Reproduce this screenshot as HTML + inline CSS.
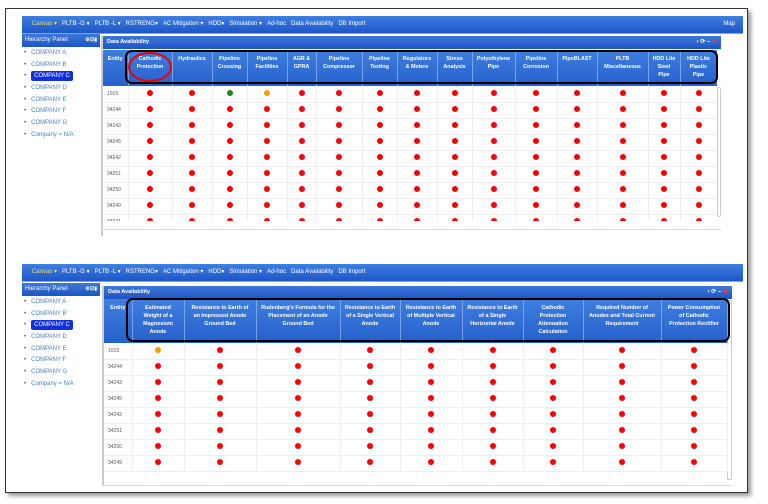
<!DOCTYPE html><html><head><meta charset="utf-8"><style>
*{box-sizing:border-box;margin:0;padding:0}
body{width:768px;height:504px;background:#fff;position:relative;overflow:hidden;font-family:"Liberation Sans",sans-serif}
.frame{position:absolute;left:5px;top:8px;width:743px;height:485px;border:1.5px solid #333;box-shadow:3px 3px 4px #999;background:#fff}
.nav{position:absolute;left:22px;height:18px;width:721px;background:linear-gradient(#3f7fe0,#1d56c8);border-bottom:1px solid #8ab;color:#fff;font-size:6px;line-height:17px;padding-left:10px;white-space:nowrap}
.nav span{margin-right:5px}.nav .y{color:#e8e070}
.hp{position:absolute;left:22px;width:78px;height:13px;background:linear-gradient(#3b77d8,#1d55c4);color:#fff;font-size:6px;line-height:13px;padding-left:3px}
.hp b{position:absolute;right:3px;font-size:5px}
.list{position:absolute;left:24px;font-size:6px;color:#4a7fc8}
.list div{height:11.7px;line-height:11.7px}
.list div:before{content:"•";color:#555;margin-right:5px}
.list .sel{display:inline-block;background:#1030e0;color:#fff;padding:0 3px;border-radius:2px;height:10px;line-height:10px}
.panel{position:absolute;background:#fff;border-left:2px solid #ccc}
.ph{position:absolute;left:0;right:0;top:0;height:13px;background:linear-gradient(#3b77d8,#1d55c4);color:#fff;font-size:5.5px;font-weight:bold;line-height:13px;padding-left:4px}
.ph i{position:absolute;right:4px;font-style:normal;font-size:6px}
table{border-collapse:collapse;table-layout:fixed}
th{background:linear-gradient(#3f7fe0,#2560cc);color:#fff;font-size:5.4px;font-weight:bold;vertical-align:top;padding:5px 4px 0;border-right:1px solid #7aa4e8;line-height:8px}
td{height:16px;border-right:1px solid #eee;border-bottom:1px solid #eee;text-align:center;font-size:5px;color:#555}
td.e{text-align:left;padding-left:4px}
.d{display:inline-block;width:6px;height:6px;border-radius:50%;background:#f00}
.o{background:#f5a000}.g{background:#1a8a1a}
.box{position:absolute;border:2.5px solid #000;border-radius:7px}
</style></head><body>
<div class="frame"></div>
<div class="nav" style="top:16px"><span class="y">Canvas ▾</span><span>PLTB -G ▾</span><span>PLTB -L ▾</span><span>RSTRENG▾</span><span>AC Mitigation ▾</span><span>HDD▾</span><span>Simulation ▾</span><span>Ad-hoc</span><span>Data Availability</span><span>DB Import</span><span style="position:absolute;right:3px">Map</span></div>
<div class="hp" style="top:34px">Hierarchy Panel<b>⚙☑▮</b></div>
<div class="list" style="top:48px"><div>COMPANY A</div><div>COMPANY B</div><div><span class="sel">COMPANY C</span></div><div>COMPANY D</div><div>COMPANY E</div><div>COMPANY F</div><div>COMPANY G</div><div>Company = N/A</div></div>
<div class="panel" style="left:101px;top:36px;width:620px;height:194px;border-bottom:1px solid #ddd">
<div class="ph">Data Availability<i>‹ ⟳ <span>‒</span> <span style="color:#f33">✖</span></i></div>
<div style="position:absolute;right:0;top:51px;width:4px;height:130px;border:1px solid #ccc;border-radius:2px"></div>
</div>
<div style="position:absolute;left:101px;top:230px;width:2px;height:6px;background:#ccc"></div>
<div style="position:absolute;left:103px;top:50px;width:614px;height:171px;overflow:hidden">
<table style="width:614px">
<colgroup><col style="width:25px"><col style="width:44px"><col style="width:40px"><col style="width:35px"><col style="width:40px"><col style="width:29px"><col style="width:46px"><col style="width:35px"><col style="width:40px"><col style="width:35px"><col style="width:43px"><col style="width:42px"><col style="width:40px"><col style="width:51px"><col style="width:32px"><col style="width:37px"></colgroup>
<tr style="height:36px"><th style="padding:5px 1px 0">Entity</th><th>Cathodic Protection</th><th>Hydraulics</th><th>Pipeline Crossing</th><th>Pipeline Facilities</th><th>AGR &amp; GPRA</th><th>Pipeline Compressor</th><th>Pipeline Testing</th><th>Regulators &amp; Meters</th><th>Stress Analysis</th><th>Polyethylene Pipe</th><th>Pipeline Corrosion</th><th>PipeBLAST</th><th>PLTB Miscellaneous</th><th>HDD Lite Steel Pipe</th><th>HDD Lite Plastic Pipe</th></tr>
<tr><td class="e">1015</td><td><i class="d"></i></td><td><i class="d"></i></td><td><i class="d g"></i></td><td><i class="d o"></i></td><td><i class="d"></i></td><td><i class="d"></i></td><td><i class="d"></i></td><td><i class="d"></i></td><td><i class="d"></i></td><td><i class="d"></i></td><td><i class="d"></i></td><td><i class="d"></i></td><td><i class="d"></i></td><td><i class="d"></i></td><td><i class="d"></i></td></tr>
<tr><td class="e">34244</td><td><i class="d"></i></td><td><i class="d"></i></td><td><i class="d"></i></td><td><i class="d"></i></td><td><i class="d"></i></td><td><i class="d"></i></td><td><i class="d"></i></td><td><i class="d"></i></td><td><i class="d"></i></td><td><i class="d"></i></td><td><i class="d"></i></td><td><i class="d"></i></td><td><i class="d"></i></td><td><i class="d"></i></td><td><i class="d"></i></td></tr>
<tr><td class="e">34243</td><td><i class="d"></i></td><td><i class="d"></i></td><td><i class="d"></i></td><td><i class="d"></i></td><td><i class="d"></i></td><td><i class="d"></i></td><td><i class="d"></i></td><td><i class="d"></i></td><td><i class="d"></i></td><td><i class="d"></i></td><td><i class="d"></i></td><td><i class="d"></i></td><td><i class="d"></i></td><td><i class="d"></i></td><td><i class="d"></i></td></tr>
<tr><td class="e">34245</td><td><i class="d"></i></td><td><i class="d"></i></td><td><i class="d"></i></td><td><i class="d"></i></td><td><i class="d"></i></td><td><i class="d"></i></td><td><i class="d"></i></td><td><i class="d"></i></td><td><i class="d"></i></td><td><i class="d"></i></td><td><i class="d"></i></td><td><i class="d"></i></td><td><i class="d"></i></td><td><i class="d"></i></td><td><i class="d"></i></td></tr>
<tr><td class="e">34242</td><td><i class="d"></i></td><td><i class="d"></i></td><td><i class="d"></i></td><td><i class="d"></i></td><td><i class="d"></i></td><td><i class="d"></i></td><td><i class="d"></i></td><td><i class="d"></i></td><td><i class="d"></i></td><td><i class="d"></i></td><td><i class="d"></i></td><td><i class="d"></i></td><td><i class="d"></i></td><td><i class="d"></i></td><td><i class="d"></i></td></tr>
<tr><td class="e">34251</td><td><i class="d"></i></td><td><i class="d"></i></td><td><i class="d"></i></td><td><i class="d"></i></td><td><i class="d"></i></td><td><i class="d"></i></td><td><i class="d"></i></td><td><i class="d"></i></td><td><i class="d"></i></td><td><i class="d"></i></td><td><i class="d"></i></td><td><i class="d"></i></td><td><i class="d"></i></td><td><i class="d"></i></td><td><i class="d"></i></td></tr>
<tr><td class="e">34250</td><td><i class="d"></i></td><td><i class="d"></i></td><td><i class="d"></i></td><td><i class="d"></i></td><td><i class="d"></i></td><td><i class="d"></i></td><td><i class="d"></i></td><td><i class="d"></i></td><td><i class="d"></i></td><td><i class="d"></i></td><td><i class="d"></i></td><td><i class="d"></i></td><td><i class="d"></i></td><td><i class="d"></i></td><td><i class="d"></i></td></tr>
<tr><td class="e">34249</td><td><i class="d"></i></td><td><i class="d"></i></td><td><i class="d"></i></td><td><i class="d"></i></td><td><i class="d"></i></td><td><i class="d"></i></td><td><i class="d"></i></td><td><i class="d"></i></td><td><i class="d"></i></td><td><i class="d"></i></td><td><i class="d"></i></td><td><i class="d"></i></td><td><i class="d"></i></td><td><i class="d"></i></td><td><i class="d"></i></td></tr>
<tr><td class="e">34241</td><td><i class="d"></i></td><td><i class="d"></i></td><td><i class="d"></i></td><td><i class="d"></i></td><td><i class="d"></i></td><td><i class="d"></i></td><td><i class="d"></i></td><td><i class="d"></i></td><td><i class="d"></i></td><td><i class="d"></i></td><td><i class="d"></i></td><td><i class="d"></i></td><td><i class="d"></i></td><td><i class="d"></i></td><td><i class="d"></i></td></tr>
</table></div>
<div class="box" style="left:125px;top:50px;width:593px;height:34px"></div>
<div style="position:absolute;left:128px;top:52px;width:44px;height:30px;border:2.5px solid #e00;border-radius:50%"></div>

<div class="nav" style="top:264px"><span class="y">Canvas ▾</span><span>PLTB -G ▾</span><span>PLTB -L ▾</span><span>RSTRENG▾</span><span>AC Mitigation ▾</span><span>HDD▾</span><span>Simulation ▾</span><span>Ad-hoc</span><span>Data Availability</span><span>DB Import</span></div>
<div class="hp" style="top:283px">Hierarchy Panel<b>⚙☑▮</b></div>
<div class="list" style="top:297px"><div>COMPANY A</div><div>COMPANY B</div><div><span class="sel">COMPANY C</span></div><div>COMPANY D</div><div>COMPANY E</div><div>COMPANY F</div><div>COMPANY G</div><div>Company = N/A</div></div>
<div class="panel" style="left:102px;top:286px;width:630px;height:200px;border-bottom:1px solid #ddd">
<div class="ph">Data Availability<i>‹ ⟳ <span>‒</span> <span style="color:#f33">✖</span></i></div>
<div style="position:absolute;right:0;top:14px;width:5px;height:180px;border:1px solid #ccc;border-radius:2px"></div>
</div>
<table style="position:absolute;left:104px;top:299px;width:623px">
<colgroup><col style="width:28px"><col style="width:52px"><col style="width:72px"><col style="width:84px"><col style="width:60px"><col style="width:62px"><col style="width:61px"><col style="width:60px"><col style="width:78px"><col style="width:66px"></colgroup>
<tr style="height:44px"><th style="padding:5px 1px 0">Entity</th><th>Estimated Weight of a Magnesium Anode</th><th>Resistance to Earth of an Impressed Anode Ground Bed</th><th>Rudenberg's Formula for the Placement of an Anode Ground Bed</th><th>Resistance to Earth of a Single Vertical Anode</th><th>Resistance to Earth of Multiple Vertical Anode</th><th>Resistance to Earth of a Single Horizontal Anode</th><th>Cathodic Protection Attenuation Calculation</th><th>Required Number of Anodes and Total Current Requirement</th><th>Power Consumption of Cathodic Protection Rectifier</th></tr>
<tr><td class="e">1015</td><td><i class="d o"></i></td><td><i class="d"></i></td><td><i class="d"></i></td><td><i class="d"></i></td><td><i class="d"></i></td><td><i class="d"></i></td><td><i class="d"></i></td><td><i class="d"></i></td><td><i class="d"></i></td></tr>
<tr><td class="e">34244</td><td><i class="d"></i></td><td><i class="d"></i></td><td><i class="d"></i></td><td><i class="d"></i></td><td><i class="d"></i></td><td><i class="d"></i></td><td><i class="d"></i></td><td><i class="d"></i></td><td><i class="d"></i></td></tr>
<tr><td class="e">34243</td><td><i class="d"></i></td><td><i class="d"></i></td><td><i class="d"></i></td><td><i class="d"></i></td><td><i class="d"></i></td><td><i class="d"></i></td><td><i class="d"></i></td><td><i class="d"></i></td><td><i class="d"></i></td></tr>
<tr><td class="e">34245</td><td><i class="d"></i></td><td><i class="d"></i></td><td><i class="d"></i></td><td><i class="d"></i></td><td><i class="d"></i></td><td><i class="d"></i></td><td><i class="d"></i></td><td><i class="d"></i></td><td><i class="d"></i></td></tr>
<tr><td class="e">34242</td><td><i class="d"></i></td><td><i class="d"></i></td><td><i class="d"></i></td><td><i class="d"></i></td><td><i class="d"></i></td><td><i class="d"></i></td><td><i class="d"></i></td><td><i class="d"></i></td><td><i class="d"></i></td></tr>
<tr><td class="e">34251</td><td><i class="d"></i></td><td><i class="d"></i></td><td><i class="d"></i></td><td><i class="d"></i></td><td><i class="d"></i></td><td><i class="d"></i></td><td><i class="d"></i></td><td><i class="d"></i></td><td><i class="d"></i></td></tr>
<tr><td class="e">34250</td><td><i class="d"></i></td><td><i class="d"></i></td><td><i class="d"></i></td><td><i class="d"></i></td><td><i class="d"></i></td><td><i class="d"></i></td><td><i class="d"></i></td><td><i class="d"></i></td><td><i class="d"></i></td></tr>
<tr><td class="e">34249</td><td><i class="d"></i></td><td><i class="d"></i></td><td><i class="d"></i></td><td><i class="d"></i></td><td><i class="d"></i></td><td><i class="d"></i></td><td><i class="d"></i></td><td><i class="d"></i></td><td><i class="d"></i></td></tr>
</table>
<div class="box" style="left:126px;top:298px;width:604px;height:44px"></div>
</body></html>
